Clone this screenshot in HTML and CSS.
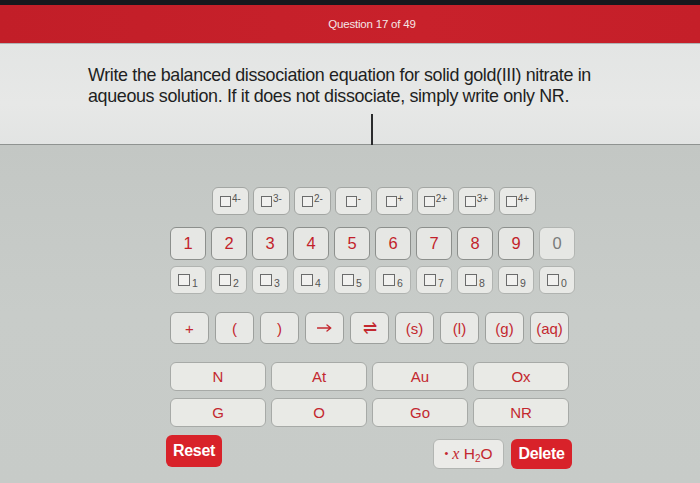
FILE: index.html
```html
<!DOCTYPE html>
<html>
<head>
<meta charset="utf-8">
<link rel="stylesheet" href="styles.css">
</head>
<body>
<div class="screen">
  <div class="topbar"></div>
  <div class="header"><span class="htitle">Question 17 of 49</span></div>
  <div class="question">
    <p class="qtext">Write the balanced dissociation equation for solid gold(III) nitrate in<br>aqueous solution. If it does not dissociate, simply write only NR.</p>
    <div class="answer"><span class="cursor"></span></div>
  </div>
  <div class="panel">
    <div class="row r-charge">
      <div class="key k-charge"><span class="box"></span><sup>4-</sup></div>
      <div class="key k-charge"><span class="box"></span><sup>3-</sup></div>
      <div class="key k-charge"><span class="box"></span><sup>2-</sup></div>
      <div class="key k-charge"><span class="box"></span><sup>-</sup></div>
      <div class="key k-charge"><span class="box"></span><sup>+</sup></div>
      <div class="key k-charge"><span class="box"></span><sup>2+</sup></div>
      <div class="key k-charge"><span class="box"></span><sup>3+</sup></div>
      <div class="key k-charge"><span class="box"></span><sup>4+</sup></div>
    </div>
    <div class="row r-digit">
      <div class="key k-digit">1</div>
      <div class="key k-digit">2</div>
      <div class="key k-digit">3</div>
      <div class="key k-digit">4</div>
      <div class="key k-digit">5</div>
      <div class="key k-digit">6</div>
      <div class="key k-digit">7</div>
      <div class="key k-digit">8</div>
      <div class="key k-digit">9</div>
      <div class="key k-digit k-off">0</div>
    </div>
    <div class="row r-sub">
      <div class="key k-sub"><span class="box"></span><sub>1</sub></div>
      <div class="key k-sub"><span class="box"></span><sub>2</sub></div>
      <div class="key k-sub"><span class="box"></span><sub>3</sub></div>
      <div class="key k-sub"><span class="box"></span><sub>4</sub></div>
      <div class="key k-sub"><span class="box"></span><sub>5</sub></div>
      <div class="key k-sub"><span class="box"></span><sub>6</sub></div>
      <div class="key k-sub"><span class="box"></span><sub>7</sub></div>
      <div class="key k-sub"><span class="box"></span><sub>8</sub></div>
      <div class="key k-sub"><span class="box"></span><sub>9</sub></div>
      <div class="key k-sub"><span class="box"></span><sub>0</sub></div>
    </div>
    <div class="row r-sym">
      <div class="key k-sym">+</div>
      <div class="key k-sym">(</div>
      <div class="key k-sym">)</div>
      <div class="key k-sym"><svg class="arrow" width="15" height="8" viewBox="0 0 15 8"><path d="M0.5 4H13.5M10 1L13.8 4L10 7" fill="none" stroke="#c3282f" stroke-width="1.3" stroke-linecap="round" stroke-linejoin="round"/></svg></div>
      <div class="key k-sym k-eq">⇌</div>
      <div class="key k-sym">(s)</div>
      <div class="key k-sym">(l)</div>
      <div class="key k-sym">(g)</div>
      <div class="key k-sym">(aq)</div>
    </div>
    <div class="row r-el r-el1">
      <div class="key k-el">N</div>
      <div class="key k-el">At</div>
      <div class="key k-el">Au</div>
      <div class="key k-el">Ox</div>
    </div>
    <div class="row r-el r-el2">
      <div class="key k-el">G</div>
      <div class="key k-el">O</div>
      <div class="key k-el">Go</div>
      <div class="key k-el">NR</div>
    </div>
    <div class="row r-act">
      <div class="key k-red k-reset">Reset</div>
      <div class="act-right">
        <div class="key k-water"><span class="wlabel"><span class="dot">•</span><span class="xvar">x</span> H<span class="wsub">2</span>O</span></div>
        <div class="key k-red k-delete">Delete</div>
      </div>
    </div>
  </div>
</div>
</body>
</html>
```
FILE: styles.css
```css
html, body {
  margin: 0;
  padding: 0;
}
body {
  width: 700px;
  height: 483px;
  overflow: hidden;
  font-family: "Liberation Sans", Arial, sans-serif;
  background: #c6cac7;
}
.screen {
  width: 700px;
  height: 483px;
  display: flex;
  flex-direction: column;
}
.topbar {
  height: 5px;
  background: #17181d;
}
.header {
  height: 38px;
  background: linear-gradient(90deg, #c21e28 0%, #c8212b 60%, #c51f29 100%);
  display: flex;
  align-items: center;
  justify-content: center;
  padding-left: 44px;
  border-bottom: 1px solid #b0b4b4;
}
.htitle {
  color: #f4e6e6;
  font-size: 11.5px;
  letter-spacing: -0.2px;
  padding-bottom: 1px;
}
.question {
  height: 100px;
  background: linear-gradient(180deg, #e3e5e4 0%, #e7e8e7 60%, #e2e4e3 100%);
  border-bottom: 1px solid #8f9391;
  display: flex;
  flex-direction: column;
}
.qtext {
  margin: 21px 0 0 88px;
  font-size: 17.9px;
  line-height: 21px;
  color: #1e1f22;
  letter-spacing: -0.35px;
}
.answer {
  flex: 1;
  position: relative;
}
.cursor {
  position: absolute;
  left: 371px;
  top: 7px;
  width: 2px;
  height: 31px;
  background: #2a2b2d;
}
.panel {
  flex: 1;
  background: linear-gradient(180deg, #c3c7c4 0%, #c8ccc9 50%, #c7cbc8 100%);
  display: flex;
  flex-direction: column;
  padding-top: 42px;
}
.row {
  display: flex;
}
.key {
  box-sizing: border-box;
  display: flex;
  align-items: center;
  justify-content: center;
  background: #e8e9e6;
  border: 1.5px solid #a3a6a3;
  border-radius: 6px;
  color: #c3282f;
}
.box {
  display: inline-block;
  width: 9px;
  height: 9px;
  border: 1px solid #6a6b6b;
  background: #f1f1ef;
}
.r-charge {
  margin-left: 212px;
  gap: 4px;
}
.k-charge {
  width: 37px;
  height: 28px;
  color: #555;
}
.k-charge sup {
  font-size: 10px;
  margin-left: 1px;
  position: relative;
  top: -3px;
}
.r-digit {
  margin: 12px 0 0 170px;
  gap: 5px;
}
.k-digit {
  width: 36px;
  height: 33px;
  font-size: 16.5px;
  border-color: #8c8f8c;
  background: #e6e7e4;
  color: #c21f2b;
}
.k-off {
  color: #7a7b7b;
  border-color: #b2b5b2;
}
.r-sub {
  margin: 6px 0 0 170px;
  gap: 5px;
}
.k-sub {
  width: 36px;
  height: 28px;
  color: #555;
  border-color: #b0b3b0;
}
.k-sub .box {
  width: 10px;
  height: 10px;
}
.k-sub sub {
  font-size: 10.5px;
  margin-left: 2px;
  position: relative;
  top: 3px;
}
.r-sym {
  margin: 18px 0 0 170px;
  gap: 6px;
}
.k-sym {
  width: 39px;
  height: 32px;
  font-size: 15px;
  border-color: #9da09d;
}
.arrow {
  display: block;
}
.k-eq {
  font-size: 17px;
}
.r-el {
  margin-left: 170px;
  gap: 5px;
}
.r-el1 {
  margin-top: 18px;
}
.r-el2 {
  margin-top: 7px;
}
.k-el {
  width: 96px;
  height: 29px;
  font-size: 15px;
  border-color: #a7aaa7;
  background: #e9eae6;
}
.r-act {
  margin: 8px 0 0 166px;
  width: 406px;
  justify-content: space-between;
  align-items: flex-start;
}
.k-red {
  background: #d8222a;
  border: none;
  color: #ffffff;
  font-size: 16px;
  font-weight: 600;
  letter-spacing: -0.3px;
}
.k-reset {
  width: 56px;
  height: 32px;
}
.act-right {
  display: flex;
  gap: 7px;
  margin-top: 4px;
}
.k-water {
  width: 71px;
  height: 30px;
  font-size: 15.5px;
  border-color: #b2b5b2;
  background: #ebebe8;
}
.wlabel {
  white-space: nowrap;
}
.k-water .dot {
  font-size: 11px;
  margin-right: 4px;
  vertical-align: 2px;
}
.k-water .xvar {
  font-family: "Liberation Serif", "Times New Roman", serif;
  font-style: italic;
  font-size: 16px;
}
.k-water .wsub {
  font-size: 10px;
  vertical-align: -3px;
}
.k-delete {
  width: 61px;
  height: 30px;
}
```
